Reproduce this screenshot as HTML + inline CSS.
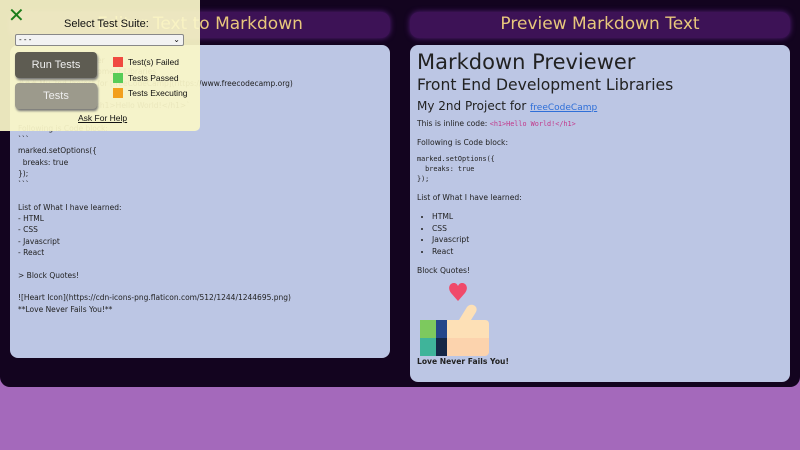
<!DOCTYPE html>
<html><head><style>
*{box-sizing:border-box;margin:0;padding:0}
body{width:800px;height:450px;background:#a469bb;font-family:"DejaVu Sans",sans-serif;position:relative;overflow:hidden}
#top{position:absolute;left:0;top:0;width:800px;height:387px;background:#13041f;border-radius:0 0 10px 10px}
.hdr{position:absolute;top:12px;height:26px;width:380px;background:#3d1256;border-radius:9px;box-shadow:0 0 6px #5a2080;color:#e8c77c;font-size:17px;text-align:center;line-height:24px}
.pane{position:absolute;top:45px;width:380px;background:#bcc6e4;border-radius:8px}
#ed{left:10px;height:313px;padding:10px 8px;font-size:7.5px;line-height:11.3px;color:#222;white-space:pre}
#pv{left:410px;height:337px;padding:6px 7px;color:#222}
#ov{position:absolute;left:0;top:0;width:200px;height:131px;background:rgba(250,246,200,.93);border-radius:0 0 5px 0;font-family:"Liberation Sans",sans-serif;font-size:10px;color:#111}
.btn{position:absolute;left:15px;width:82px;height:26px;border-radius:4px;color:#eee;font-size:11px;text-align:center;line-height:26px;box-shadow:1px 2px 2px #777}
.lg{position:absolute;left:113px;font-size:8.5px}
.lg i{position:absolute;left:0;top:0;width:10px;height:10px}
.lg span{position:absolute;left:15px;top:0;white-space:nowrap}
code{font-family:"DejaVu Sans Mono",monospace;color:#c2378a;font-size:6.8px}
.t{font-size:7.6px}
</style></head><body>
<div id="top">
<div class="hdr" style="left:10px">Editor Text to Markdown</div>
<div class="hdr" style="left:410px">Preview Markdown Text</div>
<div class="pane" id="ed"># Markdown Previewer
## Front End Development Libraries
### My 2nd Project for [freeCodeCamp](https://www.freecodecamp.org)

This is inline code: &#96;&lt;h1&gt;Hello World!&lt;/h1&gt;&#96;

Following is Code block:
&#96;&#96;&#96;
marked.setOptions({
  breaks: true
});
&#96;&#96;&#96;

List of What I have learned:
- HTML
- CSS
- Javascript
- React

&gt; Block Quotes!

![Heart Icon](https://cdn-icons-png.flaticon.com/512/1244/1244695.png)
**Love Never Fails You!**</div>
<div class="pane" id="pv">
<div style="font-size:21px;line-height:22px">Markdown Previewer</div>
<div style="font-size:15.6px;line-height:19px;margin-top:3px">Front End Development Libraries</div>
<div style="font-size:12px;line-height:15px;margin-top:4px">My 2nd Project for <span style="color:#2f6fd8;text-decoration:underline;font-size:9px">freeCodeCamp</span></div>
<div class="t" style="margin-top:3px">This is inline code: <code>&lt;h1&gt;Hello World!&lt;/h1&gt;</code></div>
<div class="t" style="margin-top:10px">Following is Code block:</div>
<pre style="font-family:'DejaVu Sans Mono',monospace;font-size:6.8px;line-height:10px;margin-top:7px">marked.setOptions({
  breaks: true
});</pre>
<div class="t" style="margin-top:9px">List of What I have learned:</div>
<ul class="t" style="line-height:11.5px;margin:9px 0 0 15px">
<li>HTML</li><li>CSS</li><li>Javascript</li><li>React</li></ul>
<div class="t" style="margin-top:9px">Block Quotes!</div>
<svg width="80" height="84" viewBox="0 0 80 84" style="display:block;margin-top:8px">
<path d="M34 10c-6-8 4-14 7-7c3-7 13-1 7 7l-7 8z" fill="#f04a6a"/>
<rect x="3" y="37" width="16" height="18" fill="#7dc95e"/>
<rect x="3" y="55" width="16" height="18" fill="#3fb49a"/>
<rect x="19" y="37" width="11" height="18" fill="#25478a"/>
<rect x="19" y="55" width="11" height="18" fill="#152746"/>
<path d="M30 37h12l8-13c4-5 12-1 9 5l-5 8h14c3 0 4 2 4 4v14h-42z" fill="#fde0b6"/>
<path d="M30 55h42v14c0 2-2 4-4 4h-38z" fill="#fcd3ad"/>
</svg>
<div class="t" style="font-weight:bold;margin-top:-10px">Love Never Fails You!</div>
</div>
</div>
<div id="ov">
<div style="position:absolute;left:8px;top:3px;color:#1b7d1b;font-size:20px;font-weight:bold;font-family:'DejaVu Sans',sans-serif">✕</div>
<div style="position:absolute;left:64px;top:18px;font-size:11px">Select Test Suite:</div>
<div style="position:absolute;left:15px;top:34px;width:169px;height:12px;border:1px solid #888;background:#f2f2f2;border-radius:2px;font-size:8px;line-height:10px;padding-left:3px">- - -<span style="position:absolute;right:3px;top:0">⌄</span></div>
<div class="btn" style="top:52px;background:#5e5c52">Run Tests</div>
<div class="btn" style="top:83px;background:#9c9a8c">Tests</div>
<div class="lg" style="top:57px"><i style="background:#f04a40"></i><span>Test(s) Failed</span></div>
<div class="lg" style="top:73px"><i style="background:#57cc57"></i><span>Tests Passed</span></div>
<div class="lg" style="top:88px"><i style="background:#f29f1c"></i><span>Tests Executing</span></div>
<div style="position:absolute;left:78px;top:113px;font-size:8.5px;text-decoration:underline">Ask For Help</div>
</div>
</body></html>
